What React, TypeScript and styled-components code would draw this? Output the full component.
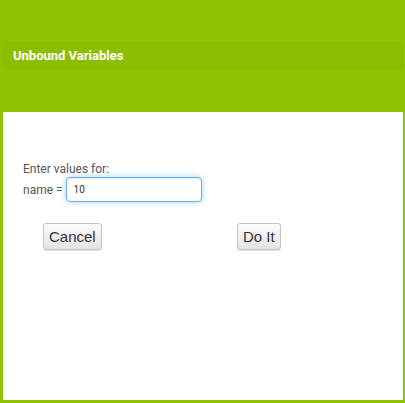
import React from "react";
import styled, { createGlobalStyle } from "styled-components";

const Global = createGlobalStyle`
  html, body { margin: 0; padding: 0; background: #ffffff; }
  body { font-family: Roboto, "Liberation Sans", sans-serif; }
`;

const Frame = styled.div`
  box-sizing: border-box;
  width: 405px;
  height: 403px;
  background: #8fc200;
  padding: 0 2px 3px 3px;
  display: flex;
  flex-direction: column;
`;

const Header = styled.div`
  height: 112px;
  padding-top: 42px;
  box-sizing: border-box;
`;

const TitleBar = styled.div`
  box-sizing: border-box;
  height: 27px;
  background: #8cbe00;
  border: 1px solid #89ba00;
  display: flex;
  align-items: center;
  padding-left: 9px;
  color: #ffffff;
  font-family: Roboto, "Liberation Sans", sans-serif;
  font-weight: 700;
  font-size: 13px;
`;

const Body = styled.div`
  flex: 1;
  background: #ffffff;
  padding: 50px 0 0 20px;
  box-sizing: border-box;
`;

const Label = styled.div`
  font-family: Roboto, "Liberation Sans", sans-serif;
  font-size: 12px;
  color: #555555;
  line-height: 14px;
`;

const Row = styled.div`
  display: flex;
  align-items: center;
  gap: 3px;
  margin-top: 1px;
`;

const Input = styled.input`
  box-sizing: border-box;
  width: 136px;
  height: 25px;
  margin: 0;
  border: 1px solid #66afe9;
  border-radius: 4px;
  outline: none;
  padding: 0 7px;
  font-family: Roboto, "Liberation Sans", sans-serif;
  font-size: 10px;
  color: #333333;
  box-shadow: inset 0 1px 1px rgba(0, 0, 0, 0.075), 0 0 6px rgba(102, 175, 233, 0.6);
`;

const Buttons = styled.div`
  display: grid;
  grid-template-columns: 194px auto;
  justify-content: start;
  margin-top: 21px;
  padding-left: 20px;
`;

const Button = styled.button`
  box-sizing: border-box;
  height: 27px;
  margin: 0;
  padding: 0 5px;
  font-family: "Liberation Sans", Arial, sans-serif;
  font-size: 15px;
  color: #333333;
  background: linear-gradient(#fbfbfb, #e4e4e4);
  border: 1px solid #c4c4c4;
  border-radius: 3px;
  box-shadow: 0 1px 1px rgba(0, 0, 0, 0.12);
  justify-self: start;
  cursor: pointer;
`;

export default function App() {
  return (
    <>
      <Global />
      <Frame>
        <Header>
          <TitleBar>Unbound Variables</TitleBar>
        </Header>
        <Body>
          <Label>Enter values for:</Label>
          <Row>
            <Label>name =</Label>
            <Input defaultValue="10" autoFocus />
          </Row>
          <Buttons>
            <Button>Cancel</Button>
            <Button>Do It</Button>
          </Buttons>
        </Body>
      </Frame>
    </>
  );
}
